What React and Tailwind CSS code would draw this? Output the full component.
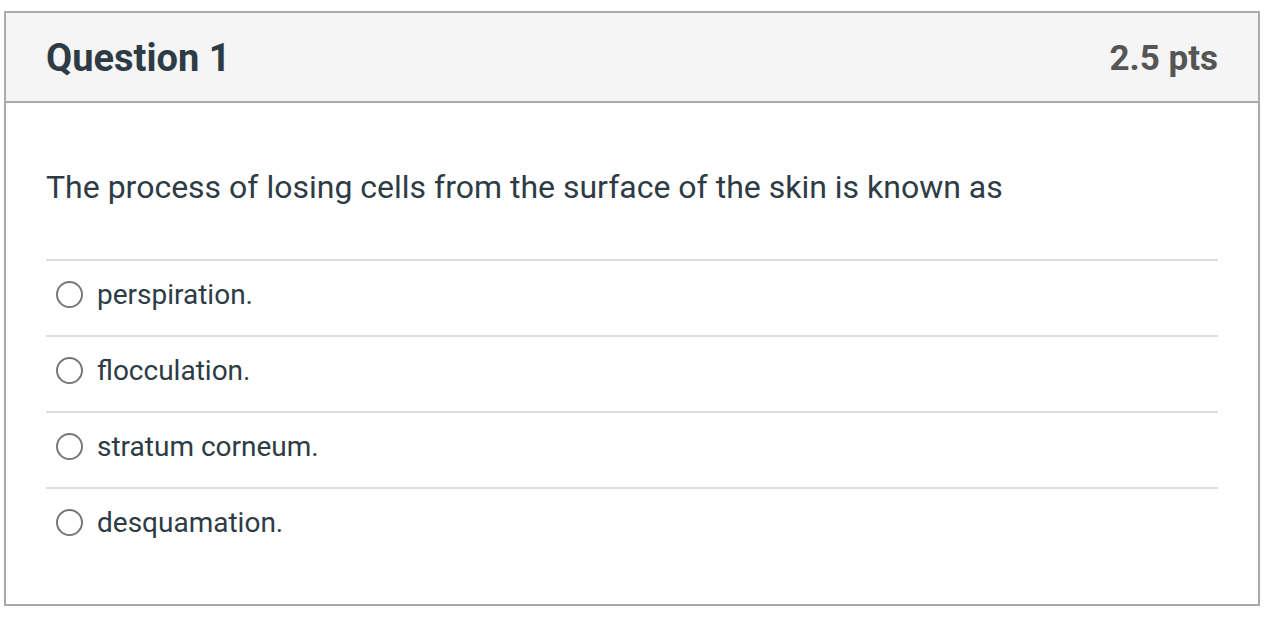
import React from 'react';

const answers = ['perspiration.', 'flocculation.', 'stratum corneum.', 'desquamation.'];

function App() {
  return (
    <div className="min-h-screen bg-white pt-[11px] px-[4px] font-['Roboto',sans-serif]">
      <div className="w-[1256px] border-2 border-[#aaaaaa]">
        <div className="h-[90px] bg-[#f5f5f5] border-b-2 border-[#aaaaaa] flex items-center justify-between pl-[40px] pr-[40px]">
          <h2 className="text-[38px] font-bold text-[#2d3b45] leading-none mt-[2px]">Question 1</h2>
          <span className="text-[35px] font-bold text-[#555555] leading-none mt-[2px]">2.5 pts</span>
        </div>
        <div className="px-[40px] pt-[68px] pb-[41px]">
          <p className="text-[32px] text-[#2d3b45] leading-none">
            The process of losing cells from the surface of the skin is known as
          </p>
          <div className="mt-[56px]">
            {answers.map((a) => (
              <div key={a} className="h-[76px] border-t-2 border-[#dddddd] flex items-center pl-[10px] pb-[7px]">
                <span className="w-[27px] h-[27px] rounded-full border-2 border-[#777777] bg-white shrink-0" />
                <span className="ml-[14px] text-[28px] text-[#2d3b45] leading-none">{a}</span>
              </div>
            ))}
          </div>
        </div>
      </div>
    </div>
  );
}

export default App;
